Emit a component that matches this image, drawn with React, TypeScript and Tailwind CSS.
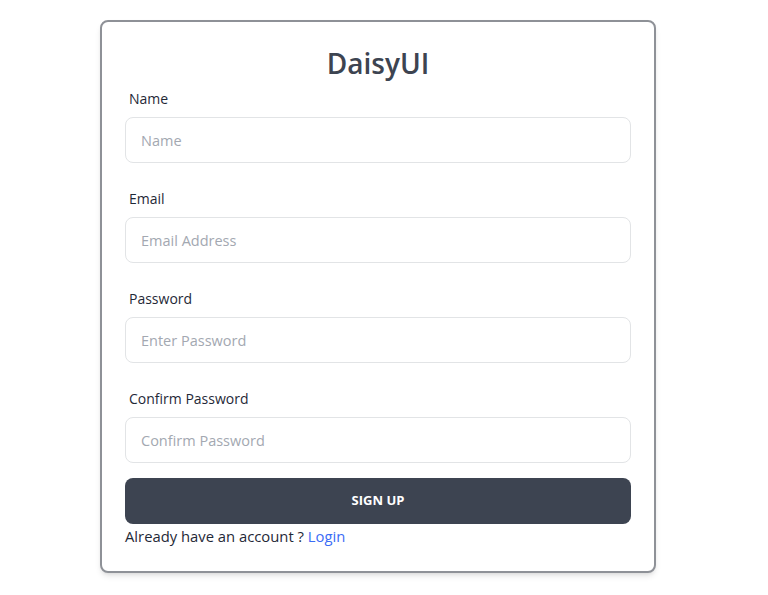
export default function App() {
  const fields = [
    { label: 'Name', placeholder: 'Name', type: 'text' },
    { label: 'Email', placeholder: 'Email Address', type: 'email' },
    { label: 'Password', placeholder: 'Enter Password', type: 'password' },
    { label: 'Confirm Password', placeholder: 'Confirm Password', type: 'password' },
  ];

  return (
    <div className="min-h-screen bg-white pl-[100px] pt-[20px] font-['Open_Sans',sans-serif]">
      <div className="w-[556px] rounded-lg border-2 border-[#8e9197] bg-white px-[23px] pt-[23px] pb-[23px] shadow-md">
        <h1 className="text-center text-[28px] leading-[36px] font-semibold text-[#3d4451]">
          DaisyUI
        </h1>

        {fields.map((f, i) => (
          <div key={f.label} className={i === fields.length - 1 ? 'mb-[15px] flex flex-col' : 'mb-[18px] flex flex-col'}>
            <label className="px-1 py-2 text-[14px] leading-[20px] text-[#1f2937]">{f.label}</label>
            <input
              type="text"
              placeholder={f.placeholder}
              className="h-[46px] w-full rounded-lg border border-[#e2e4e6] px-[15px] text-[14.5px] text-gray-800 outline-none placeholder:text-[#a3a8b1]"
            />
          </div>
        ))}

        <button className="h-[46px] w-full rounded-lg bg-[#3d4451] text-[13px] font-bold uppercase text-white">
          Sign up
        </button>

        <p className="text-[14.8px] leading-[24px] text-[#1f2937]">
          Already have an account ? <a href="#" className="text-[#3b6cf6]">Login</a>
        </p>
      </div>
    </div>
  );
}
